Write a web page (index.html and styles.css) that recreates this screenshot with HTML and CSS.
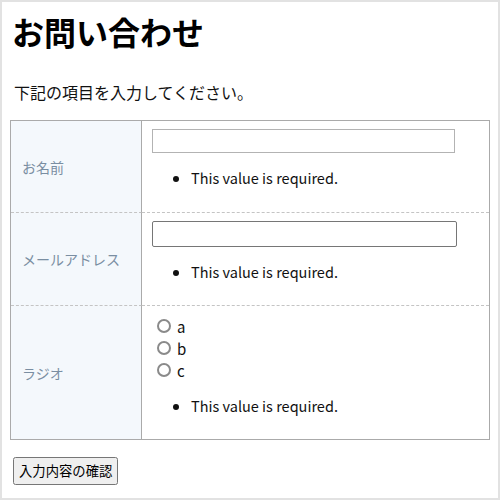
FILE: index.html
```html
<!DOCTYPE html>
<html lang="ja">
<head>
<meta charset="utf-8">
<title>お問い合わせ</title>
<link rel="stylesheet" href="styles.css">
</head>
<body>
<div class="frame">
  <h1 class="title">お問い合わせ</h1>
  <p class="lead">下記の項目を入力してください。</p>
  <form class="form">
    <div class="form-table">
      <div class="label">お名前</div>
      <div class="field field-name">
        <input class="text text-name" type="text">
        <ul class="errors"><li>This value is required.</li></ul>
      </div>
      <div class="label sep">メールアドレス</div>
      <div class="field sep">
        <input class="text text-email" type="email">
        <ul class="errors"><li>This value is required.</li></ul>
      </div>
      <div class="label sep">ラジオ</div>
      <div class="field sep field-radio">
        <label class="radio"><input type="radio" name="r"> a</label>
        <label class="radio"><input type="radio" name="r"> b</label>
        <label class="radio"><input type="radio" name="r"> c</label>
        <ul class="errors"><li>This value is required.</li></ul>
      </div>
    </div>
    <button class="submit" type="button">入力内容の確認</button>
  </form>
</div>
</body>
</html>
```
FILE: styles.css
```css
html, body {
  margin: 0;
  padding: 0;
}
body {
  font-family: "Noto Sans CJK JP", "Noto Sans", sans-serif;
  color: #111;
  background: #fff;
}
.frame {
  box-sizing: border-box;
  height: 500px;
  border: 2px solid #e2e2e2;
  padding: 8px;
}
.title {
  margin: 0 0 0 2px;
  font-size: 32px;
  line-height: 42px;
  font-weight: 700;
  color: #000;
}
.lead {
  margin: 28px 0 16px 4px;
  font-size: 16px;
  line-height: 24px;
}
.form-table {
  display: grid;
  grid-template-columns: 131px 1fr;
  border: 1px solid #aaa;
}
.label {
  box-sizing: border-box;
  display: flex;
  align-items: center;
  padding: 0 10px 0 11px;
  background: #f4f8fc;
  border-right: 1px solid #aaa;
  color: #7a8ea2;
  font-size: 14px;
}
.field {
  padding: 8px 10px 8px 10px;
}
.field-name {
  padding-bottom: 9px;
}
.sep {
  border-top: 1px dashed #c4c4c4;
}
.text {
  display: block;
  box-sizing: border-box;
  margin: 0;
  font: inherit;
}
.text-name {
  width: 303px;
  height: 24px;
  border: 1px solid #b3b3b3;
  border-radius: 0;
}
.text-email {
  width: 305px;
  height: 26px;
  border: 1px solid #767676;
  border-radius: 2px;
}
.errors {
  margin: 15px 0;
  padding-left: 39px;
  font-size: 14.5px;
  line-height: 20px;
}
.field-radio {
  padding-top: 9px;
}
.radio {
  display: flex;
  align-items: center;
  height: 22px;
  font-size: 15px;
}
.radio input {
  appearance: none;
  box-sizing: border-box;
  margin: 0 6px 0 5px;
  width: 14px;
  height: 14px;
  border: 2px solid #8a8a8a;
  border-radius: 50%;
  background: #fff;
}
.submit {
  margin: 17px 0 0 3px;
  font-family: "Noto Sans CJK JP", sans-serif;
  font-size: 13.33px;
  line-height: 20px;
  padding: 2px 4px;
  color: #000;
}
```
